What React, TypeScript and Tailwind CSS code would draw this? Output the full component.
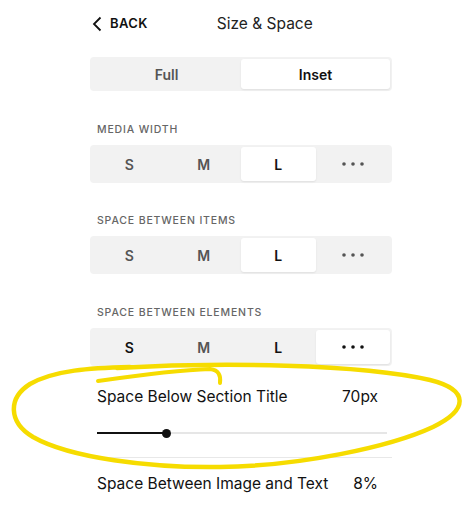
import React from "react";

type Option = { key: string; label: string };

const sizeOptions: Option[] = [
  { key: "s", label: "S" },
  { key: "m", label: "M" },
  { key: "l", label: "L" },
  { key: "more", label: "..." },
];

function Dots({ active }: { active: boolean }) {
  const fill = active ? "#111111" : "#555555";
  return (
    <svg width="22" height="4" viewBox="0 0 22 4">
      <circle cx="2" cy="2" r="1.8" fill={fill} />
      <circle cx="11" cy="2" r="1.8" fill={fill} />
      <circle cx="20" cy="2" r="1.8" fill={fill} />
    </svg>
  );
}

function Segmented({
  options,
  selected,
  dark = [],
  height = "h-[38px]",
}: {
  options: Option[];
  selected: string;
  dark?: string[];
  height?: string;
}) {
  return (
    <div className={`flex ${height} w-full rounded-[4px] bg-[#f2f2f2] p-[2px]`}>
      {options.map((o) => {
        const active = o.key === selected;
        const strong = active || dark.includes(o.key);
        return (
          <div
            key={o.key}
            className={`flex flex-1 items-center justify-center rounded-[3px] text-[14px] font-semibold ${
              active ? "bg-white shadow-[0_1px_2px_rgba(0,0,0,0.08)]" : ""
            } ${strong ? "text-[#111111]" : "text-[#555555]"}`}
          >
            {o.key === "more" ? <Dots active={active} /> : o.label}
          </div>
        );
      })}
    </div>
  );
}

function Label({ children, className = "" }: { children: React.ReactNode; className?: string }) {
  return (
    <div
      className={`pl-[7px] text-[10.5px] leading-[14px] font-medium uppercase tracking-[0.08em] text-[#666666] ${className}`}
    >
      {children}
    </div>
  );
}

function Annotation() {
  // hand drawn yellow highlight round the slider row
  return (
    <svg
      className="pointer-events-none absolute left-0 top-0"
      width="474"
      height="516"
      viewBox="0 0 474 516"
      fill="none"
    >
      <path
        d="M 117 368 C 220 362, 360 364, 430 380 C 470 390, 468 410, 433 427 C 390 447, 300 466, 220 467 C 150 468, 70 458, 33 437 C 8 422, 8 398, 30 384 C 55 370, 90 368, 130 367"
        stroke="#f6dc00"
        strokeWidth="4.5"
        strokeLinecap="round"
      />
      <path
        d="M 98 381 C 140 375, 180 370, 210 369 C 219 370, 221 376, 220 383"
        stroke="#f6dc00"
        strokeWidth="4"
        strokeLinecap="round"
      />
    </svg>
  );
}

export default function App() {
  return (
    <div
      className="relative h-[516px] w-[474px] overflow-hidden bg-white text-[#111111]"
      style={{ fontFamily: "Inter, 'Liberation Sans', sans-serif" }}
    >
      <div className="ml-[90px] w-[302px]">
        {/* header */}
        <div className="flex h-[48px] items-center">
          <div className="flex items-center pl-[2px]">
            <svg width="10" height="16" viewBox="0 0 10 16" fill="none">
              <path d="M 8.5 1.5 L 2 8 L 8.5 14.5" stroke="#111111" strokeWidth="1.8" />
            </svg>
            <span className="ml-[8px] text-[13px] font-semibold tracking-[0.03em]">BACK</span>
          </div>
          <span className="ml-[69px] text-[15.5px] font-normal text-[#222222]">Size &amp; Space</span>
        </div>

        <div className="mt-[9px]">
          <Segmented
            height="h-[34px]"
            selected="inset"
            options={[
              { key: "full", label: "Full" },
              { key: "inset", label: "Inset" },
            ]}
          />
        </div>

        <Label className="mt-[32px] mb-[8px]">Media Width</Label>
        <Segmented options={sizeOptions} selected="l" />

        <Label className="mt-[31px] mb-[8px]">Space Between Items</Label>
        <Segmented options={sizeOptions} selected="l" />

        <Label className="mt-[32px] mb-[8px]">Space Between Elements</Label>
        <Segmented options={sizeOptions} selected="more" dark={["s", "l"]} />

        {/* slider row */}
        <div className="border-b border-[#e8e8e8] pb-[19px] pl-[7px] pr-[14px] pt-[21px]">
          <div className="flex h-[20px] items-center justify-between text-[15.5px] leading-[20px]">
            <span>Space Below Section Title</span>
            <span>70px</span>
          </div>
          <div className="relative mt-[21px] mr-[-9px] flex h-[10px] items-center">
            <div className="h-[2px] w-full bg-[#e6e6e6]" />
            <div className="absolute left-0 top-[4px] h-[2px] w-[70px] bg-[#111111]" />
            <div className="absolute left-[65px] top-[1px] h-[9px] w-[9px] rounded-full bg-[#111111]" />
          </div>
        </div>

        <div className="pl-[7px] pr-[14px] pt-[16px]">
          <div className="flex h-[20px] items-center justify-between text-[15.5px] leading-[20px]">
            <span>Space Between Image and Text</span>
            <span>8%</span>
          </div>
        </div>
      </div>

      <Annotation />
    </div>
  );
}
